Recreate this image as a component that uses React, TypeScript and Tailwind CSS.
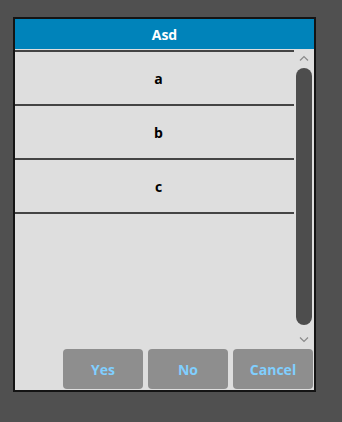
import React from "react";

const items = ["a", "b", "c"];

const Chevron = ({ up }: { up?: boolean }) => (
  <svg width="10" height="6" viewBox="0 0 10 6" className="block">
    <path
      d={up ? "M1 5.5 L5 1.5 L9 5.5" : "M1 0.5 L5 4.5 L9 0.5"}
      fill="none"
      stroke="#8a8a8a"
      strokeWidth="1.2"
    />
  </svg>
);

export default function App() {
  return (
    <div
      className="w-[342px] h-[422px] bg-[#505050] pt-[17px] pl-[13px]"
      style={{ fontFamily: '"Open Sans", "Noto Sans", sans-serif' }}
    >
      <div className="w-[303px] h-[375px] border-2 border-[#141414] flex flex-col bg-[#dedede]">
        {/* header */}
        <div className="h-[30px] bg-[#0083ba] flex items-center justify-center text-white font-bold text-[14px]">
          Asd
        </div>

        <div className="flex-1 flex flex-col pt-px">
          <div className="flex flex-1">
            {/* list */}
            <div className="w-[279px]">
              {items.map((it, i) => (
                <div
                  key={it}
                  className={`border-t-2 border-[#444444] flex items-center justify-center pl-[8px] text-black font-bold text-[14px] ${
                    i === items.length - 1 ? "h-[56px] border-b-2" : "h-[54px]"
                  }`}
                >
                  {it}
                </div>
              ))}
            </div>

            {/* scrollbar */}
            <div className="w-[16px] ml-[2px] flex flex-col items-center pt-[5px]">
              <Chevron up />
              <div className="w-[16px] h-[257px] mt-[7px] rounded-full bg-[#4d4d4d]" />
              <div className="mt-[12px]">
                <Chevron />
              </div>
            </div>
          </div>

          {/* buttons */}
          <div className="flex justify-end gap-[5px] pr-px pb-px">
            {["Yes", "No", "Cancel"].map((b) => (
              <div
                key={b}
                className="w-[80px] h-[40px] rounded-[4px] bg-[#8e8e8e] flex items-center justify-center text-[#80cfff] font-bold text-[14px]"
              >
                {b}
              </div>
            ))}
          </div>
        </div>
      </div>
    </div>
  );
}
